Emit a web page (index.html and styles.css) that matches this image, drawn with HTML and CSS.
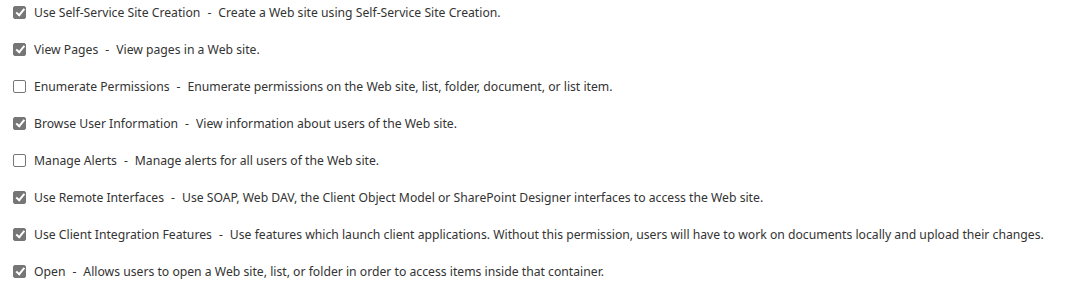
FILE: index.html
```html
<!DOCTYPE html>
<html lang="en">
<head>
  <meta charset="UTF-8">
  <title>Site Permissions</title>
  <link rel="stylesheet" href="styles.css">
</head>
<body>
  <div class="perm-list">
    <label class="perm-row"><span class="box checked"></span><span class="perm-name">Use Self-Service Site Creation</span><span class="sep">-</span><span class="perm-desc">Create a Web site using Self-Service Site Creation.</span></label>
    <label class="perm-row"><span class="box checked"></span><span class="perm-name">View Pages</span><span class="sep">-</span><span class="perm-desc">View pages in a Web site.</span></label>
    <label class="perm-row"><span class="box"></span><span class="perm-name">Enumerate Permissions</span><span class="sep">-</span><span class="perm-desc">Enumerate permissions on the Web site, list, folder, document, or list item.</span></label>
    <label class="perm-row"><span class="box checked"></span><span class="perm-name">Browse User Information</span><span class="sep">-</span><span class="perm-desc">View information about users of the Web site.</span></label>
    <label class="perm-row"><span class="box"></span><span class="perm-name">Manage Alerts</span><span class="sep">-</span><span class="perm-desc">Manage alerts for all users of the Web site.</span></label>
    <label class="perm-row"><span class="box checked"></span><span class="perm-name">Use Remote Interfaces</span><span class="sep">-</span><span class="perm-desc">Use SOAP, Web DAV, the Client Object Model or SharePoint Designer interfaces to access the Web site.</span></label>
    <label class="perm-row"><span class="box checked"></span><span class="perm-name">Use Client Integration Features</span><span class="sep">-</span><span class="perm-desc">Use features which launch client applications. Without this permission, users will have to work on documents locally and upload their changes.</span></label>
    <label class="perm-row"><span class="box checked"></span><span class="perm-name">Open</span><span class="sep">-</span><span class="perm-desc">Allows users to open a Web site, list, or folder in order to access items inside that container.</span></label>
  </div>
</body>
</html>
```

FILE: styles.css
```css
body {
  margin: 0;
  background-color: #fff;
  font-family: "Noto Sans", "Open Sans", sans-serif;
  font-size: 12.2px;
  color: #333;
}

.perm-list {
  display: flex;
  flex-direction: column;
  gap: 13px;
  padding-left: 13px;
}

.perm-row {
  display: flex;
  align-items: center;
  height: 24px;
  white-space: nowrap;
}

.box {
  width: 11px;
  height: 11px;
  border: 1px solid #767676;
  border-radius: 2px;
  background-color: #fff;
  margin-right: 8px;
  flex-shrink: 0;
  position: relative;
}

.box.checked {
  background-color: #767676;
}

.box.checked::after {
  content: "";
  position: absolute;
  left: 3.5px;
  top: 0.5px;
  width: 3px;
  height: 6.5px;
  border: solid #fff;
  border-width: 0 2px 2px 0;
  transform: rotate(40deg);
}

.sep {
  margin: 0 7px;
}
```
